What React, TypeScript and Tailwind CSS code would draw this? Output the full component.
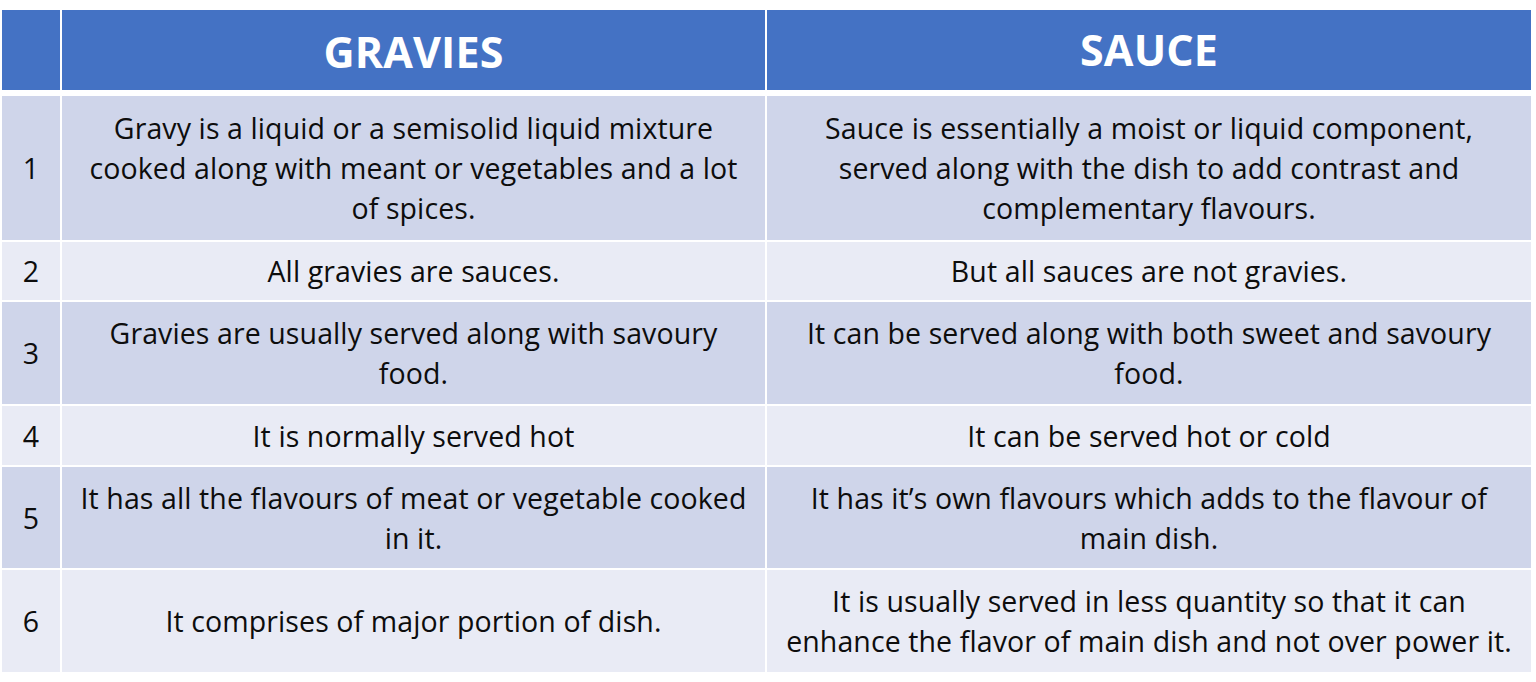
const rows: { n: string; h: string; a: string[]; b: string[] }[] = [
  {
    n: "1",
    h: "h-[144px]",
    a: [
      "Gravy is a liquid or a semisolid liquid mixture",
      "cooked along with meant or vegetables and a lot",
      "of spices.",
    ],
    b: [
      "Sauce is essentially a moist or liquid component,",
      "served along with the dish to add contrast and",
      "complementary flavours.",
    ],
  },
  { n: "2", h: "h-[58px]", a: ["All gravies are sauces."], b: ["But all sauces are not gravies."] },
  {
    n: "3",
    h: "h-[102px]",
    a: ["Gravies are usually served along with savoury", "food."],
    b: ["It can be served along with both sweet and savoury", "food."],
  },
  { n: "4", h: "h-[59px]", a: ["It is normally served hot"], b: ["It can be served hot or cold"] },
  {
    n: "5",
    h: "h-[101px]",
    a: ["It has all the flavours of meat or vegetable cooked", "in it."],
    b: ["It has it\u2019s own flavours which adds to the flavour of", "main dish."],
  },
  {
    n: "6",
    h: "h-[102px]",
    a: ["It comprises of major portion of dish."],
    b: [
      "It is usually served in less quantity so that it can",
      "enhance the flavor of main dish and not over power it.",
    ],
  },
];

function Cell({ lines, bg, h }: { lines: string[]; bg: string; h: string }) {
  return (
    <div className={`${bg} ${h} flex flex-col items-center justify-center text-center`}>
      {lines.map((l) => (
        <div key={l} className="whitespace-nowrap leading-[40px]">
          {l}
        </div>
      ))}
    </div>
  );
}

export default function App() {
  return (
    <div
      className="h-[682px] w-[1536px] bg-white pl-[2px] pt-[10px] text-[28.5px] tracking-[0.1px] text-[#0d0d0d]"
      style={{ fontFamily: '"Open Sans", "Liberation Sans", sans-serif' }}
    >
      <div className="grid w-[1529px] grid-cols-[58px_703px_764px] gap-x-[2px]">
        <div className="h-[80px] bg-[#4472c4]" />
        <div className="flex h-[80px] items-center justify-center bg-[#4472c4] pt-[4px] text-[43px] font-bold text-white">
          GRAVIES
        </div>
        <div className="flex h-[80px] items-center justify-center bg-[#4472c4] text-[43px] font-bold text-white">
          SAUCE
        </div>
      </div>
      <div className="mt-[6px] flex w-[1529px] flex-col gap-y-[2px]">
        {rows.map((r, i) => {
          const bg = i % 2 === 0 ? "bg-[#cfd5ea]" : "bg-[#e9ebf5]";
          return (
            <div key={r.n} className="grid grid-cols-[58px_703px_764px] gap-x-[2px]">
              <Cell lines={[r.n]} bg={bg} h={r.h} />
              <Cell lines={r.a} bg={bg} h={r.h} />
              <Cell lines={r.b} bg={bg} h={r.h} />
            </div>
          );
        })}
      </div>
    </div>
  );
}
